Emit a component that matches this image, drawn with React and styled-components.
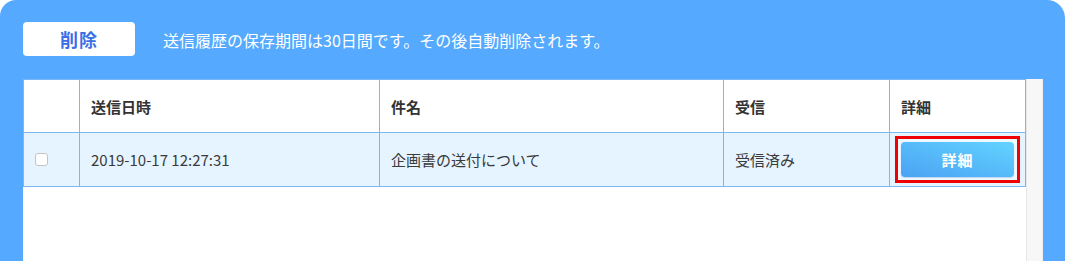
import React from "react";
import styled, { createGlobalStyle } from "styled-components";

const GlobalStyle = createGlobalStyle`
  html, body {
    margin: 0;
    padding: 0;
    background: #fff;
  }
  body {
    font-family: "Noto Sans CJK JP", "Noto Sans", sans-serif;
    color: #333;
  }
`;

const Panel = styled.div`
  box-sizing: border-box;
  width: 1065px;
  height: 261px;
  background: #55aaff;
  border-radius: 16px 18px 0 0;
  padding: 22px 22px 0 23px;
  display: flex;
  flex-direction: column;
  overflow: hidden;
`;

const Toolbar = styled.div`
  display: flex;
  align-items: center;
  gap: 28px;
  height: 34px;
`;

const DeleteButton = styled.button`
  width: 112px;
  height: 34px;
  border: none;
  border-radius: 4px;
  background: #fff;
  color: #3c6fe6;
  font-family: inherit;
  font-size: 18px;
  font-weight: 700;
  letter-spacing: 1px;
  cursor: pointer;
`;

const Notice = styled.p`
  margin: 0;
  color: #fff;
  font-size: 16px;
  line-height: 1;
  margin-top: 2px;
`;

const Content = styled.div`
  margin-top: 23px;
  flex: 1;
  display: flex;
`;

const Sheet = styled.div`
  flex: 1;
  background: #fff;
`;

const Track = styled.div`
  width: 16px;
  background: #f7f7f7;
  border-left: 1px solid #e7e7e7;
  border-right: 1px solid #ededed;
`;

const Table = styled.table`
  border-collapse: collapse;
  table-layout: fixed;
  width: 1002px;
  font-size: 15px;
`;

const Th = styled.th`
  box-sizing: border-box;
  width: ${(p) => p.w}px;
  height: 53px;
  padding: 0 0 0 11px;
  text-align: left;
  font-weight: 700;
  color: #333;
  border: 1px solid #7ab7f4;
`;

const Tr = styled.tr`
  background: #e6f4ff;
`;

const Td = styled.td`
  box-sizing: border-box;
  height: 54px;
  padding: ${(p) => (p.tight ? "0 5px" : "0 0 0 11px")};
  border: 1px solid #7ab7f4;
  color: #3a3a3a;
  text-align: ${(p) => (p.center ? "center" : "left")};
  vertical-align: middle;
`;

const Check = styled.span`
  display: inline-block;
  box-sizing: border-box;
  width: 13px;
  height: 13px;
  margin-top: 4px;
  border: 1px solid #c4c4c4;
  border-radius: 3px;
  background: #fff;
`;

const Highlight = styled.div`
  border: 3px solid #f00000;
  padding: 3px;
  background: #eef8ff;
  display: flex;
`;

const DetailButton = styled.button`
  flex: 1;
  height: 35px;
  border: none;
  border-radius: 4px;
  background: linear-gradient(to top right, #4aa2f4, #63d3ff);
  box-shadow: 0 1px 1px rgba(40, 110, 190, 0.25);
  color: #fff;
  font-family: inherit;
  font-size: 15px;
  font-weight: 700;
  letter-spacing: 1px;
  cursor: pointer;
`;

const rows = [
  { date: "2019-10-17 12:27:31", subject: "企画書の送付について", status: "受信済み" },
];

export default function App() {
  return (
    <>
      <GlobalStyle />
      <Panel>
        <Toolbar>
          <DeleteButton>削除</DeleteButton>
          <Notice>送信履歴の保存期間は30日間です。その後自動削除されます。</Notice>
        </Toolbar>
        <Content>
          <Sheet>
            <Table>
              <thead>
                <tr>
                  <Th w={56}></Th>
                  <Th w={300}>送信日時</Th>
                  <Th w={344}>件名</Th>
                  <Th w={166}>受信</Th>
                  <Th w={136}>詳細</Th>
                </tr>
              </thead>
              <tbody>
                {rows.map((r, i) => (
                  <Tr key={i}>
                    <Td>
                      <Check />
                    </Td>
                    <Td>{r.date}</Td>
                    <Td>{r.subject}</Td>
                    <Td>{r.status}</Td>
                    <Td tight>
                      <Highlight>
                        <DetailButton>詳細</DetailButton>
                      </Highlight>
                    </Td>
                  </Tr>
                ))}
              </tbody>
            </Table>
          </Sheet>
          <Track />
        </Content>
      </Panel>
    </>
  );
}
